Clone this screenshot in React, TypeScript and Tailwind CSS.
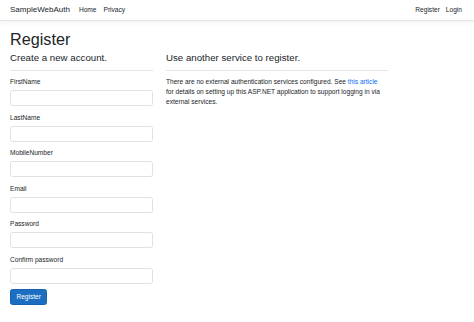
const fields = ['FirstName', 'LastName', 'MobileNumber', 'Email', 'Password', 'Confirm password'];

const FormField = ({ label }: { label: string }) => (
  <div className="mb-[6.5px]">
    <label className="block h-[10px] mb-[3px] text-[6.6px] leading-[10px] text-[#212529]">{label}</label>
    <input
      type={label.toLowerCase().includes('password') ? 'password' : 'text'}
      className="block w-full h-[16px] rounded-[2.5px] border border-[#dee2e6] bg-white outline-none"
    />
  </div>
);

const App = () => {
  return (
    <div className="min-h-[322px] bg-white text-[#212529]" style={{ fontFamily: '"Liberation Sans", Arial, sans-serif' }}>
      {/* 상단 네비게이션 */}
      <nav className="h-[21px] flex items-center justify-between px-[10px] bg-white border-b border-[#e5e5e5] shadow-[0_2px_5px_rgba(0,0,0,0.05)]">
        <div className="flex items-center">
          <span className="text-[8px] text-[#212529] mr-[9px]">SampleWebAuth</span>
          <span className="text-[6.6px] text-[#212529] mr-[7px]">Home</span>
          <span className="text-[6.6px] text-[#212529]">Privacy</span>
        </div>
        <div className="flex items-center gap-[6px] pr-[2px]">
          <span className="text-[6.6px] text-[#212529]">Register</span>
          <span className="text-[6.6px] text-[#212529]">Login</span>
        </div>
      </nav>

      <main className="px-[10px] pt-[8.5px]">
        <h1 className="text-[16.2px] leading-[19.4px] mb-[3px]">Register</h1>

        <div className="flex">
          {/* 회원가입 폼 */}
          <div className="w-[143px]">
            <h4 className="text-[9.7px] leading-[11.6px] mb-[3px]">Create a new account.</h4>
            <hr className="mt-[6px] mb-[6.5px] border-t border-[#e5e5e5]" />
            {fields.map((f) => (
              <FormField key={f} label={f} />
            ))}
            <button className="block -mt-[1.5px] h-[16px] px-[5.4px] rounded-[2.5px] bg-[#1b6ec2] border border-[#1861ac] text-white text-[6.6px] leading-[14px]">
              Register
            </button>
          </div>

          {/* 외부 서비스 */}
          <div className="w-[222px] ml-[13px]">
            <h4 className="text-[9.7px] leading-[11.6px] mb-[3px]">Use another service to register.</h4>
            <hr className="mt-[6px] mb-[6.5px] border-t border-[#e5e5e5]" />
            <p className="text-[6.6px] leading-[9.8px]">
              There are no external authentication services configured. See{' '}
              <a className="text-[#0d6efd]">this article</a>
              <br />
              for details on setting up this ASP.NET application to support logging in via external services.
            </p>
          </div>
        </div>
      </main>
    </div>
  );
};

export default App;
